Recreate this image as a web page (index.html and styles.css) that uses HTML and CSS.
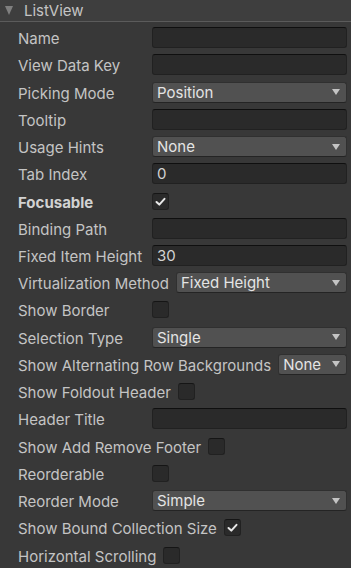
FILE: index.html
```html
<!DOCTYPE html>
<html>
<head>
<meta charset="utf-8">
<link rel="stylesheet" href="styles.css">
</head>
<body>
<div class="inspector">
  <div class="foldout-header">
    <span class="foldout-arrow"></span>
    <span class="foldout-title">ListView</span>
  </div>
  <div class="rows">
    <div class="row"><span class="label">Name</span><div class="text-field"></div></div>
    <div class="row"><span class="label">View Data Key</span><div class="text-field"></div></div>
    <div class="row"><span class="label">Picking Mode</span><div class="dropdown"><span>Position</span><i class="arrow"></i></div></div>
    <div class="row"><span class="label">Tooltip</span><div class="text-field"></div></div>
    <div class="row"><span class="label">Usage Hints</span><div class="dropdown"><span>None</span><i class="arrow"></i></div></div>
    <div class="row"><span class="label">Tab Index</span><div class="text-field">0</div></div>
    <div class="row"><span class="label bold">Focusable</span><div class="checkbox checked"><svg viewBox="0 0 17 17"><path d="M4.5 9 L7.3 11.6 L12.5 5.8"/></svg></div></div>
    <div class="row"><span class="label">Binding Path</span><div class="text-field"></div></div>
    <div class="row"><span class="label">Fixed Item Height</span><div class="text-field">30</div></div>
    <div class="row"><span class="label">Virtualization Method</span><div class="dropdown"><span>Fixed Height</span><i class="arrow"></i></div></div>
    <div class="row"><span class="label">Show Border</span><div class="checkbox"></div></div>
    <div class="row"><span class="label">Selection Type</span><div class="dropdown"><span>Single</span><i class="arrow"></i></div></div>
    <div class="row"><span class="label">Show Alternating Row Backgrounds</span><div class="dropdown"><span>None</span><i class="arrow"></i></div></div>
    <div class="row"><span class="label">Show Foldout Header</span><div class="checkbox"></div></div>
    <div class="row"><span class="label">Header Title</span><div class="text-field"></div></div>
    <div class="row"><span class="label">Show Add Remove Footer</span><div class="checkbox"></div></div>
    <div class="row"><span class="label">Reorderable</span><div class="checkbox"></div></div>
    <div class="row"><span class="label">Reorder Mode</span><div class="dropdown"><span>Simple</span><i class="arrow"></i></div></div>
    <div class="row"><span class="label">Show Bound Collection Size</span><div class="checkbox checked"><svg viewBox="0 0 17 17"><path d="M4.5 9 L7.3 11.6 L12.5 5.8"/></svg></div></div>
    <div class="row"><span class="label">Horizontal Scrolling</span><div class="checkbox"></div></div>
  </div>
</div>
</body>
</html>
```

FILE: styles.css
```css
html, body {
  margin: 0;
  padding: 0;
  background: #383838;
}
body {
  width: 351px;
  height: 568px;
  overflow: hidden;
  font-family: Inter, "Noto Sans", sans-serif;
  font-size: 15px;
  color: #c4c4c4;
}
.inspector {
  display: flex;
  flex-direction: column;
}
.foldout-header {
  height: 21px;
  background: #3e3e3e;
  border-bottom: 1px solid #5b5b5b;
  display: flex;
  align-items: center;
  padding-left: 5px;
  gap: 11px;
}
.foldout-arrow {
  width: 0;
  height: 0;
  border-left: 4.5px solid transparent;
  border-right: 4.5px solid transparent;
  border-top: 9px solid #7f7f7f;
  margin-top: -1px;
}
.foldout-title {
  color: #c4c4c4;
  line-height: 21px;
}
.rows {
  display: flex;
  flex-direction: column;
  padding: 2px 4px 0 18px;
}
.row {
  height: 27.24px;
  display: flex;
  align-items: center;
}
.label {
  flex: none;
  min-width: 127px;
  padding-right: 7px;
  padding-top: 3px;
  white-space: nowrap;
  line-height: 20px;
}
.label.bold {
  font-weight: 700;
  color: #d2d2d2;
}
.text-field {
  flex: 1;
  height: 21px;
  box-sizing: border-box;
  background: #2a2a2a;
  border: 1px solid #212121;
  border-top-color: #0f0f0f;
  border-radius: 3px;
  padding: 1px 4px 0;
  line-height: 18px;
  color: #d2d2d2;
}
.dropdown {
  flex: 1;
  height: 21px;
  box-sizing: border-box;
  background: #515151;
  border: 1px solid #303030;
  border-bottom-color: #242424;
  border-radius: 3px;
  padding: 0 4px;
  display: flex;
  align-items: center;
  justify-content: space-between;
  color: #e4e4e4;
  line-height: 19px;
}
.arrow {
  width: 0;
  height: 0;
  border-left: 4.5px solid transparent;
  border-right: 4.5px solid transparent;
  border-top: 6px solid #c4c4c4;
  margin-right: 2px;
}
.checkbox {
  flex: none;
  width: 17px;
  height: 17px;
  box-sizing: border-box;
  background: #2a2a2a;
  border: 1px solid #212121;
  border-top-color: #151515;
  border-radius: 3px;
  display: flex;
  align-items: center;
  justify-content: center;
}
.checkbox svg {
  width: 17px;
  height: 17px;
  flex: none;
}
.checkbox path {
  fill: none;
  stroke: #e8e8e8;
  stroke-width: 2;
  stroke-linecap: round;
  stroke-linejoin: round;
}
```
